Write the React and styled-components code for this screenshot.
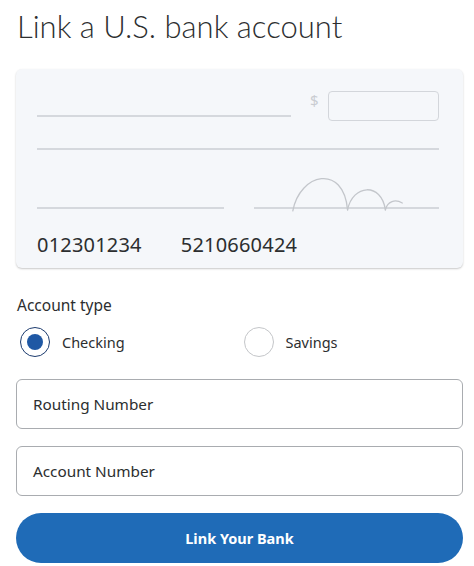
import React, { useState } from 'react';
import styled, { createGlobalStyle } from 'styled-components';

const GlobalStyle = createGlobalStyle`
    html, body {
        margin: 0;
        padding: 0;
        background: #ffffff;
    }
    body {
        font-family: 'Noto Sans', 'Open Sans', sans-serif;
        color: #2c2e2f;
    }
`;

const Page = styled.div`
    width: 474px;
    box-sizing: border-box;
    padding: 7px 11px 0 16px;
    display: flex;
    flex-direction: column;
`;

const Title = styled.h1`
    margin: 0 0 0 1px;
    font-family: 'Lato', 'Open Sans', sans-serif;
    font-weight: 300;
    font-size: 31px;
    line-height: 39px;
    color: #2c2e2f;
`;

const Check = styled.div`
    margin-top: 23px;
    height: 199px;
    box-sizing: border-box;
    padding: 22px 24px 0 21px;
    background: #f5f7fa;
    border-radius: 6px;
    box-shadow: 0 1px 2px rgba(0, 0, 0, 0.22);
    display: flex;
    flex-direction: column;
`;

const LineRow = styled.div`
    display: flex;
    flex-direction: row;
    align-items: flex-end;
    margin-top: ${({ top }) => top || 0}px;
`;

const Rule = styled.div`
    height: 2px;
    background: #d5d8dd;
    width: ${({ w }) => (w ? `${w}px` : 'auto')};
    flex: ${({ w }) => (w ? 'none' : '1')};
    margin-bottom: ${({ lift }) => lift || 0}px;
`;

const Spacer = styled.span`
    width: ${({ w }) => w}px;
`;

const Dollar = styled.span`
    margin: 0 9px 0 19px;
    align-self: flex-start;
    font-size: 15px;
    line-height: 18px;
    color: #c9ccd1;
`;

const AmountBox = styled.div`
    width: 113px;
    height: 30px;
    box-sizing: border-box;
    border: 1.5px solid #d3d6db;
    border-radius: 4px;
`;

const Numbers = styled.div`
    margin-top: 18px;
    display: flex;
    gap: 39px;
    font-size: 20px;
    line-height: 24px;
    color: #2c2e2f;
    letter-spacing: 0.2px;
`;

const AccountLabel = styled.div`
    margin: 27px 0 0 1px;
    font-size: 15.5px;
    line-height: 20px;
    color: #2c2e2f;
`;

const RadioGroup = styled.div`
    margin-top: 12px;
    display: grid;
    grid-template-columns: 1fr 1fr;
`;

const RadioOption = styled.label`
    display: flex;
    align-items: center;
    gap: 12px;
    padding-left: 4px;
    font-size: 14.5px;
    color: #2c2e2f;
    cursor: pointer;
`;

const RadioCircle = styled.span`
    width: 30px;
    height: 30px;
    box-sizing: border-box;
    border-radius: 50%;
    border: ${({ checked }) => (checked ? '1.5px solid #1c3b6e' : '1.5px solid #c4c6c9')};
    background: #fff;
    display: flex;
    align-items: center;
    justify-content: center;

    &::after {
        content: '';
        width: 16px;
        height: 16px;
        border-radius: 50%;
        background: #1f58a4;
        display: ${({ checked }) => (checked ? 'block' : 'none')};
    }
`;

const Field = styled.div`
    margin-top: ${({ top }) => top}px;
    height: 50px;
    box-sizing: border-box;
    border: 1.5px solid #a9acb0;
    border-radius: 6px;
    display: flex;
    align-items: center;
    padding-left: 16px;
    font-size: 15.3px;
    color: #2c2e2f;
`;

const LinkButton = styled.button`
    margin-top: 17px;
    height: 50px;
    border: none;
    border-radius: 25px;
    background: #1f6bb7;
    color: #ffffff;
    font-family: 'Noto Sans', 'Open Sans', sans-serif;
    font-weight: 700;
    font-size: 14.5px;
    cursor: pointer;
`;

function Signature() {
    return (
        <svg width="186" height="40" viewBox="0 0 186 40" fill="none">
            <line x1="0" y1="33" x2="186" y2="33" stroke="#d5d8dd" strokeWidth="2" />
            <g stroke="#c3c6cb" strokeWidth="1.3" fill="none" strokeLinecap="round">
                <path d="M39 36 C46 -2, 90 -12, 94 35" />
                <path d="M94 35 C99 9, 128 7, 132 35" />
                <path d="M132 35 C134 26, 142 24, 149 28" />
            </g>
        </svg>
    );
}

export default function App() {
    const [type, setType] = useState('checking');

    return (
        <Page>
            <GlobalStyle />
            <Title>Link a U.S. bank account</Title>

            <Check>
                <LineRow>
                    <Rule w={254} lift={4} />
                    <Dollar>$</Dollar>
                    <AmountBox />
                </LineRow>
                <LineRow top={27}>
                    <Rule />
                </LineRow>
                <LineRow top={25}>
                    <Rule w={187} lift={6} />
                    <Spacer w={30} />
                    <Signature />
                </LineRow>
                <Numbers>
                    <span>012301234</span>
                    <span>5210660424</span>
                </Numbers>
            </Check>

            <AccountLabel>Account type</AccountLabel>
            <RadioGroup>
                <RadioOption onClick={() => setType('checking')}>
                    <RadioCircle checked={type === 'checking'} />
                    Checking
                </RadioOption>
                <RadioOption onClick={() => setType('savings')}>
                    <RadioCircle checked={type === 'savings'} />
                    Savings
                </RadioOption>
            </RadioGroup>

            <Field top={22}>Routing Number</Field>
            <Field top={17}>Account Number</Field>
            <LinkButton>Link Your Bank</LinkButton>
        </Page>
    );
}
